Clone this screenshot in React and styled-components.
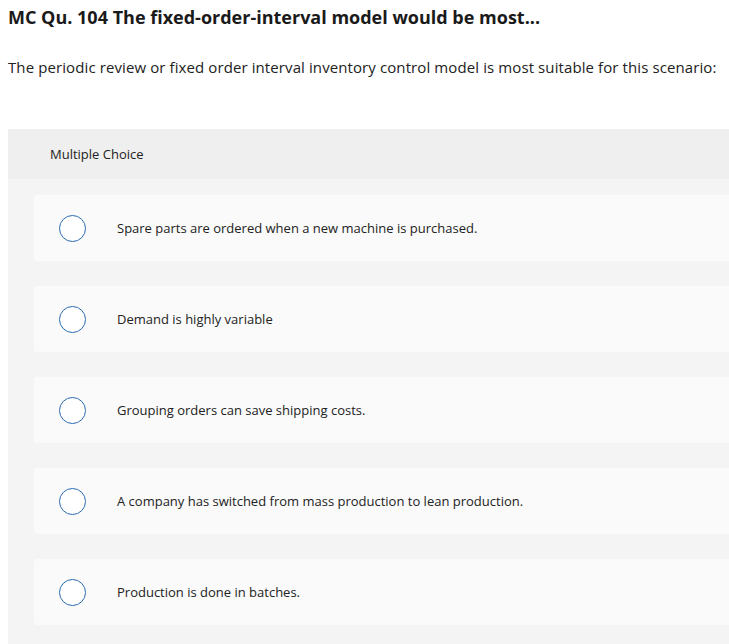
import React from "react";
import styled, { createGlobalStyle } from "styled-components";

const Global = createGlobalStyle`
  html, body { margin: 0; padding: 0; background: #fff; overflow: hidden; }
  body { font-family: "Open Sans", "Liberation Sans", sans-serif; color: #1a1a1a; }
`;

const Page = styled.div`
  padding: 0 0 0 8px;
`;

const Title = styled.h1`
  margin: 0;
  padding-top: 5px;
  font-size: 18px;
  line-height: 24px;
  font-weight: 700;
  color: #1a1a1a;
`;

const Prompt = styled.p`
  margin: 27px 0 0;
  font-size: 15px;
  line-height: 22px;
  letter-spacing: 0.1px;
  color: #222;
`;

const Panel = styled.section`
  margin-top: 51px;
  background: #f4f4f4;
  padding-bottom: 40px;
`;

const PanelHeader = styled.div`
  height: 50px;
  background: #efefef;
  display: flex;
  align-items: center;
  padding-left: 42px;
  font-size: 13px;
  color: #222;
`;

const Options = styled.div`
  display: flex;
  flex-direction: column;
  gap: 25px;
  padding: 16px 0 0 26px;
`;

const Option = styled.label`
  height: 66px;
  background: #fafafa;
  border-radius: 3px 0 0 3px;
  display: flex;
  align-items: center;
  padding-left: 25px;
  cursor: pointer;
`;

const Radio = styled.span`
  width: 25px;
  height: 25px;
  border-radius: 50%;
  border: 1.5px solid #2a6ab0;
  background: #fff;
  flex-shrink: 0;
`;

const OptionText = styled.span`
  margin-left: 31px;
  font-size: 13px;
  color: #222;
`;

const choices = [
  "Spare parts are ordered when a new machine is purchased.",
  "Demand is highly variable",
  "Grouping orders can save shipping costs.",
  "A company has switched from mass production to lean production.",
  "Production is done in batches.",
];

export default function App() {
  return (
    <Page>
      <Global />
      <Title>MC Qu. 104 The fixed-order-interval model would be most...</Title>
      <Prompt>
        The periodic review or fixed order interval inventory control model is most suitable for this scenario:
      </Prompt>
      <Panel>
        <PanelHeader>Multiple Choice</PanelHeader>
        <Options>
          {choices.map((c) => (
            <Option key={c}>
              <Radio />
              <OptionText>{c}</OptionText>
            </Option>
          ))}
        </Options>
      </Panel>
    </Page>
  );
}
